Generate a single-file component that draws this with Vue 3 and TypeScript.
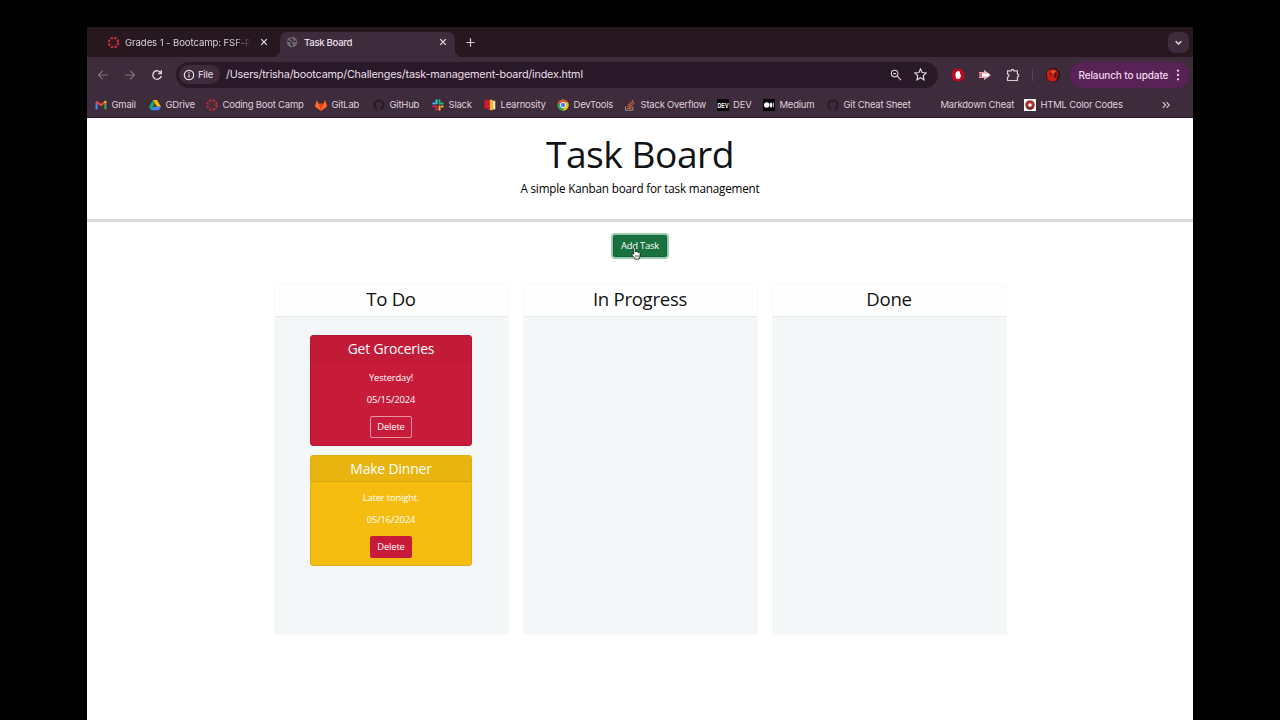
<script setup lang="ts">
interface Task { title: string; note: string; due: string; tone: 'late' | 'soon' }
interface Lane { name: string; tasks: Task[] }

const bookmarks: { icon: string; label: string }[] = [
  { icon: 'gmail', label: 'Gmail' },
  { icon: 'drive', label: 'GDrive' },
  { icon: 'canvas', label: 'Coding Boot Camp' },
  { icon: 'gitlab', label: 'GitLab' },
  { icon: 'github', label: 'GitHub' },
  { icon: 'slack', label: 'Slack' },
  { icon: 'learn', label: 'Learnosity' },
  { icon: 'chrome', label: 'DevTools' },
  { icon: 'stack', label: 'Stack Overflow' },
  { icon: 'dev', label: 'DEV' },
  { icon: 'medium', label: 'Medium' },
  { icon: 'github', label: 'Git Cheat Sheet' },
  { icon: 'none', label: 'Markdown Cheat' },
  { icon: 'html', label: 'HTML Color Codes' },
]

const lanes: Lane[] = [
  {
    name: 'To Do',
    tasks: [
      { title: 'Get Groceries', note: 'Yesterday!', due: '05/15/2024', tone: 'late' },
      { title: 'Make Dinner', note: 'Later tonight.', due: '05/16/2024', tone: 'soon' },
    ],
  },
  { name: 'In Progress', tasks: [] },
  { name: 'Done', tasks: [] },
]
</script>

<template>
  <div class="screen">
    <div class="window">
      <div class="tabs">
        <div class="tab">
          <svg class="fav" viewBox="0 0 14 14"><circle cx="7" cy="7" r="5.2" fill="none" stroke="#c8313c" stroke-width="2.2" stroke-dasharray="2.7 1.384" /><circle cx="7" cy="7" r="2.9" fill="none" stroke="#c8313c" stroke-width=".8" stroke-dasharray=".8 1.477" /></svg>
          <span class="tab-title fade">Grades 1 - Bootcamp: FSF-PT</span>
          <svg class="x" viewBox="0 0 8 8"><path d="M1.2 1.2l5.6 5.6M6.8 1.2L1.2 6.8" /></svg>
        </div>
        <div class="tab active">
          <svg class="fav globe" viewBox="0 0 12 12"><circle cx="6" cy="6" r="5.3" fill="#706873" /><path d="M1.3 5.3l3 .1 1.3 1.5-.6 1.4 1.3.5-.2 1.6M5.2 1.5l-.4 1.7 2 .5.3 1.6 1.8.5.9-1.5" fill="none" stroke="#3e2b3b" stroke-width="1.4" /></svg>
          <span class="tab-title">Task Board</span>
          <svg class="x" viewBox="0 0 8 8"><path d="M1.2 1.2l5.6 5.6M6.8 1.2L1.2 6.8" /></svg>
        </div>
        <svg class="plus" viewBox="0 0 8 8"><path d="M4 .3v7.4M.3 4h7.4" /></svg>
        <div class="tab-search"><svg viewBox="0 0 8 8"><path d="M1.5 2.8L4 5.3l2.500-2.500" /></svg></div>
      </div>

      <div class="toolbar">
        <svg class="nav dim" viewBox="0 0 12 12"><path d="M11 6H1.500M5.800 1.700L1.500 6l4.300 4.300" /></svg>
        <svg class="nav dim" viewBox="0 0 12 12"><path d="M1 6h9.500M6.200 1.700L10.500 6l-4.300 4.300" /></svg>
        <svg class="nav" viewBox="0 0 12 12"><path d="M10 4.200A4.300 4.300 0 1 0 10.300 7M10.300 1.300v3.200H7.100" /></svg>
        <div class="address">
          <div class="chip">
            <svg viewBox="0 0 12 12"><circle cx="6" cy="6" r="4.700" /><path d="M6 5.500v3M6 3.200v1.200" /></svg>
            <span>File</span>
          </div>
          <span class="url">/Users/trisha/bootcamp/Challenges/task-management-board/index.html</span>
          <svg class="glass" viewBox="0 0 12 12"><circle cx="4.600" cy="4.600" r="3.300" /><path d="M7.200 7.200l3.900 3.900M3.200 4.600H6" /></svg>
          <svg class="star" viewBox="0 0 12 12"><path d="M6 .8l1.500 3.400 3.800.4-2.800 2.500.8 3.800L6 9l-3.300 1.900.8-3.800L.7 4.600l3.800-.4z" /></svg>
        </div>
        <svg class="adblock" viewBox="0 0 14 14"><path d="M4.300.7h5.400l3.600 3.600v5.400l-3.600 3.600H4.300L.7 9.700V4.300z" fill="#bd0b20" /><path d="M4.500 5.500V8c0 2 1 3 2.600 3s2.500-1.200 2.700-3l.2-2-1 .8V3.600h-1L7.500 3h-1l-.5.7-.8.2z" fill="#fff" /></svg>
        <svg class="arrow" viewBox="0 0 14 12"><path d="M1 3h5V.8L13 6l-7 5.200V9H1z" fill="#e5a1ac" /><path d="M4 6h7" stroke="#fff" stroke-width="3" /><path d="M1 4h3v4H1z" fill="#c5717e" /></svg>
        <svg class="puzzle" viewBox="0 0 14 14"><path d="M1.500 2.800h3.700c0-1.900 2.600-1.900 2.600 0h3.600v3.400c1.900 0 1.900 2.700 0 2.700v3.600H1.500V9.200c2 0 2-3 0-3z" /></svg>
        <i class="rule"></i>
        <svg class="avatar" viewBox="0 0 16 16"><circle cx="8" cy="8" r="7.200" fill="#391117" /><path d="M1.800 6c1-3 4-4.200 6-3.500 3 0 5 2 5.300 4.400L11 13.500c-3 2-7 .8-8.500-1.500z" fill="#c91d16" /><path d="M6 4l4-1 1 2-1.700 1.500L7 6z" fill="#e15b21" /><path d="M10 5l2 1-1 5-2-1zM5 5l1 3-1 2z" fill="#481116" /></svg>
        <div class="relaunch"><span>Relaunch to update</span><svg viewBox="0 0 4 12"><circle cx="2" cy="1.700" r="1.150" /><circle cx="2" cy="6" r="1.150" /><circle cx="2" cy="10.300" r="1.150" /></svg></div>
      </div>

      <div class="bookmarks">
        <div v-for="b in bookmarks" :key="b.label" class="bookmark">
          <svg viewBox="0 0 12 12">
            <g v-if="b.icon === 'gmail'" fill="none" stroke-width="2.200"><path d="M1.600 10.300V3" stroke="#4285f4" /><path d="M10.400 10.300V3" stroke="#34a853" /><path d="M1.200 2.500L6 6.200l4.800-3.700" stroke="#ea4335" /><path d="M9.400 3.500l1.700-1.200" stroke="#fbbc04" /></g>
            <g v-else-if="b.icon === 'drive'"><path d="M4 1h4l4 6.800H8z" fill="#fbbc04" /><path d="M4 1l2 3.400L2 11.200 0 7.800z" fill="#20a464" /><path d="M4 7.800h8l-2 3.400H2z" fill="#4285f4" /></g>
            <g v-else-if="b.icon === 'canvas'" fill="none" stroke="#b82d38"><circle cx="6" cy="6" r="4.800" stroke-width="2" stroke-dasharray="2.500 1.270" /><circle cx="6" cy="6" r="2.600" stroke-width=".8" stroke-dasharray=".8 1.242" /></g>
            <g v-else-if="b.icon === 'gitlab'"><path d="M0 6.500L2 1l1.500 3.700h5L10 1l2 5.500-.7 1.800L6 12 .7 8.300z" fill="#fc6d26" /><path d="M3.500 4.700h5L6 12z" fill="#e24329" /></g>
            <path v-else-if="b.icon === 'github'" fill="#251c25" d="M6 .4a5.700 5.700 0 0 0-1.800 11.100V9.900c-1.700.4-2-.8-2-.8-.3-.7-.8-1-.8-1 1-.2 1.500.7 1.500.7.500.8 1.300.6 1.600.4l.4-.8C3.200 8.200 2.500 7.100 2.500 5.700c0-.7.200-1.200.6-1.600-.2-.4-.1-1.200.1-1.600 0 0 .8 0 1.500.7h2.600c.7-.7 1.500-.7 1.500-.7.2.4.3 1.200.1 1.600.4.400.6.900.6 1.600 0 1.400-.7 2.500-2.400 2.700.4.400.6.800.6 1.300v1.800A5.700 5.700 0 0 0 6 .4z" />
            <g v-else-if="b.icon === 'slack'" fill="none" stroke-width="2.100" stroke-linecap="round"><path d="M4.500 1.300v3.200M1.300 4.500h1" stroke="#36c5f0" /><path d="M10.700 4.500H7.500M7.500 1.300v1" stroke="#2eb67d" /><path d="M7.500 10.700V7.500M10.700 7.500h-1" stroke="#ecb22e" /><path d="M1.300 7.500h3.200M4.500 10.700v-1" stroke="#e01e5a" /></g>
            <g v-else-if="b.icon === 'learn'"><path d="M.5.8h5.300v10.400L3 9.600H.5z" fill="#d5172c" /><path d="M5.800.8h3v10.400h-3z" fill="#f6bd2c" /><path d="M8.800 1.800h2.500v8.600H8.800z" fill="#f3dfb3" /></g>
            <g v-else-if="b.icon === 'chrome'"><circle cx="6" cy="6" r="5.700" fill="#34a853" /><path d="M1.100 3.200A5.700 5.700 0 0 1 11 3.400H6L3.700 7.300z" fill="#ea4335" /><path d="M11 3.400A5.700 5.700 0 0 1 5.700 11.700L8.200 7.300 6 3.400z" fill="#fbbc04" /><circle cx="6" cy="6" r="2.900" fill="#fff" /><circle cx="6" cy="6" r="2.200" fill="#4285f4" /></g>
            <g v-else-if="b.icon === 'stack'" fill="none"><path d="M1.500 7.500v3.700h7.300V7.500" stroke="#a58e8d" stroke-width="1" /><path d="M3 9.500h4.400M3.100 7.400l4.400.7M4 5l4 2M5.600 2.800L9 5.700M8 1l2 3.700" stroke="#d76535" stroke-width="1.100" /></g>
            <g v-else-if="b.icon === 'dev'"><rect width="12" height="12" fill="#08080a" /><text x="6" y="8.800" text-anchor="middle" textLength="11" lengthAdjust="spacingAndGlyphs" class="dev-mark">DEV</text></g>
            <g v-else-if="b.icon === 'medium'"><rect width="12" height="12" fill="#000" /><circle cx="3.700" cy="6" r="2.700" fill="#fff" /><ellipse cx="8" cy="6" rx="1.300" ry="2.600" fill="#fff" /><path d="M10.400 3.700v4.600" stroke="#fff" stroke-width=".8" /></g>
            <g v-else-if="b.icon === 'html'"><rect width="12" height="12" fill="#fff" /><circle cx="6" cy="6" r="3.300" fill="none" stroke="#a93331" stroke-width="3" /><path d="M3 8.500a4.200 4.200 0 0 0 6 0" fill="none" stroke="#542426" stroke-width="1.500" /></g>
          </svg>
          <span>{{ b.label }}</span>
        </div>
        <svg class="more" viewBox="0 0 8 8"><path d="M.8 1.200L3.600 4 .8 6.800M4.500 1.200L7.300 4 4.500 6.800" /></svg>
      </div>

      <header class="page-head">
        <h1>Task Board</h1>
        <p>A simple Kanban board for task management</p>
      </header>

      <div class="actions">
        <button class="add">Add Task
          <svg class="pointer" viewBox="0 0 10 13"><path d="M2.800 7.300V1.500c0-1.300 1.700-1.300 1.700 0v3.400c.3-.7 1.500-.5 1.500.3.400-.6 1.500-.4 1.500.4.500-.5 1.500-.2 1.500.7V9c0 1-.7 1.700-.9 3.200H4C3.600 10.600 1.500 9 1 7.800c-.5-1.300.8-1.600 1.800-.5z" fill="#fff" stroke="#111" stroke-width=".8" /><path d="M4.700 8v2.500M6 8v2.500M7.300 8v2.500" stroke="#111" stroke-width=".5" /></svg>
        </button>
      </div>

      <main class="lanes">
        <section v-for="lane in lanes" :key="lane.name" class="lane">
          <h2>{{ lane.name }}</h2>
          <div class="lane-body">
            <article v-for="t in lane.tasks" :key="t.title" class="card" :class="t.tone">
              <h3>{{ t.title }}</h3>
              <div class="card-body">
                <p>{{ t.note }}</p>
                <p>{{ t.due }}</p>
                <button>Delete</button>
              </div>
            </article>
          </div>
        </section>
      </main>
    </div>
  </div>
</template>

<style>
body { background: #000; overflow: hidden; }
</style>

<style scoped>
* { box-sizing: border-box; }
svg { display: block; flex: none; }
h1, h2, h3, p { margin: 0; font-weight: 400; }
button { font: inherit; letter-spacing: inherit; }
.screen { height: 720px; background: #000; padding: 27px 87px 0; overflow: hidden; }
.window { height: 693px; background: #fff; font-family: "Open Sans", "Noto Sans", sans-serif; color: #101214; }

.tabs, .toolbar, .bookmarks { font-family: Inter, "Liberation Sans", sans-serif; color: #ded0dc; display: flex; align-items: center; white-space: nowrap; }
.tabs { height: 30px; background: #27171f; }
.tab { width: 193px; height: 30px; padding: 0 12px 0 20px; display: flex; align-items: center; }
.tab.active { position: relative; width: 175px; height: 25px; padding: 0 8px 0 6px; margin-top: 5px; background: #3e2b3b; border-radius: 7px 7px 0 0; color: #eadfe9; }
.tab.active::before, .tab.active::after { content: ""; position: absolute; bottom: 0; width: 7px; height: 7px; }
.tab.active::before { left: -7px; background: radial-gradient(circle at 0 0, transparent 7px, #3e2b3b 7px); }
.tab.active::after { right: -7px; background: radial-gradient(circle at 100% 0, transparent 7px, #3e2b3b 7px); }
.fav { width: 13px; height: 13px; margin-right: 5px; }
.globe { width: 12px; height: 12px; margin-right: 6px; }
.tab-title { flex: 1; font-size: 9.6px; letter-spacing: -.1px; }
.active .tab-title { margin-top: -5px; font-weight: 500; letter-spacing: -.3px; }
.active svg { margin-top: -5px; }
.tab-title.fade { flex: none; width: 130px; margin-right: 5px; mask-image: linear-gradient(90deg, #000 84%, transparent 97%); }
.x { width: 8px; height: 8px; fill: none; stroke: #e7dce6; stroke-width: 1.2; }
.plus { width: 9px; height: 9px; margin-left: 11px; stroke: #d8c9d5; stroke-width: 1.1; }
.tab-search { margin-left: auto; margin-right: 4px; width: 21px; height: 21px; border-radius: 7px; background: #3e2b3b; display: grid; place-items: center; }
.tab-search svg { width: 9px; height: 9px; fill: none; stroke: #e8dce8; stroke-width: 1.2; }

.toolbar { height: 35px; background: #3e2b3b; padding: 0 4px 0 10px; }
.nav { width: 12px; height: 12px; margin-right: 15px; fill: none; stroke: #dfcfdc; stroke-width: 1.4; }
.dim { stroke: #84717f; stroke-width: 1.1; }
.address { height: 26px; width: 762px; margin-left: -2px; border-radius: 13px; background: #2a1928; display: flex; align-items: center; padding: 0 11.5px 0 3px; }
.chip { width: 41px; height: 19px; border-radius: 10px; background: #3e2b3b; display: flex; align-items: center; padding-left: 4px; gap: 3px; font-size: 9.4px; font-weight: 500; letter-spacing: -.2px; }
.chip svg { width: 12px; height: 12px; fill: none; stroke: #eadcea; stroke-width: 1.2; }
.url { margin-left: 6px; flex: 1; font-size: 10.8px; letter-spacing: -.19px; color: #eadfe9; }
.glass, .star { width: 12px; height: 12px; fill: none; stroke: #e0d1de; stroke-width: 1.1; }
.glass { margin-right: 12px; }
.star { width: 13px; height: 13px; }
.adblock { width: 14px; height: 14px; margin-left: 13px; }
.arrow { width: 14px; height: 12px; margin-left: 13px; }
.puzzle { width: 14px; height: 14px; margin-left: 14px; fill: none; stroke: #dccbd9; stroke-width: 1.2; }
.rule { width: 1px; height: 12px; background: #5b4457; margin-left: 12px; }
.avatar { width: 16px; height: 16px; margin-left: 12px; }
.relaunch { margin-left: auto; width: 119px; height: 26px; border-radius: 13px; background: #592257; color: #efd7ed; display: flex; align-items: center; justify-content: space-between; padding: 0 9.5px 0 8.5px; font-size: 10px; font-weight: 500; letter-spacing: -.13px; }
.relaunch svg { width: 4px; height: 12px; fill: #efd7ed; }

.bookmarks { height: 26px; background: #3e2b3b; border-bottom: 1px solid #29192a; padding: 0 0 0 8px; display: grid; grid-template-columns: 54px 57px 109px 58px 59px 52px 73px 67px 92.5px 46.5px 64px 97px 100px 138px 10px; }
.bookmark { display: flex; align-items: center; gap: 4.500px; font-size: 9.5px; letter-spacing: -.22px; }
.bookmark svg { width: 12px; height: 12px; }
.bookmark .dev-mark { font: 700 7.500px "Liberation Sans", sans-serif; letter-spacing: 0; fill: #fff; }
.more { width: 8px; height: 8px; fill: none; stroke: #d9c9d7; stroke-width: 1.1; }

.page-head { height: 104px; border-bottom: 3px solid #d6d9db; text-align: center; padding-top: 13px; }
h1 { font-size: 37.200px; line-height: 46px; letter-spacing: -.5px; }
.page-head p { font-size: 11.700px; line-height: 18px; margin-top: 2px; letter-spacing: -.18px; color: #000; }
.actions { height: 62px; padding-top: 13px; display: flex; justify-content: center; align-items: flex-start; }
.add { position: relative; width: 54px; height: 22px; padding: 0; border: 1px solid #14633d; border-radius: 2px; background: #19713f; color: #fff; font-size: 9.500px; letter-spacing: -.25px; line-height: 18px; box-shadow: 0 0 0 2px #9bcbb0; white-space: nowrap; }
.pointer { position: absolute; left: 17px; top: 11px; width: 10px; height: 13px; }

.lanes { display: grid; grid-template-columns: repeat(3, 235px); justify-content: center; column-gap: 14px; }
.lane { height: 351px; background: #f3f7f8; border: 1px solid #f8fafa; display: flex; flex-direction: column; }
h2 { height: 32px; background: #fefefe; border-bottom: 1px solid #e6eaeb; text-align: center; font-size: 18.600px; line-height: 28px; letter-spacing: -.28px; }
.lane-body { padding: 18px 35.500px 0; display: flex; flex-direction: column; gap: 9px; }
.card { height: 111px; border-radius: 3px; color: #fff; text-align: center; border: 1px solid; overflow: hidden; letter-spacing: -.15px; }
.late { background: #c81b3a; border-color: #b21834; }
.soon { background: #f5bd10; border-color: #ddad1c; }
h3 { height: 26px; font-size: 13.900px; line-height: 25px; border-bottom: 1px solid #c01938; background: #c21b38; }
.soon h3 { background: #eab410; border-color: #d9a90f; }
.card-body { display: flex; flex-direction: column; align-items: center; padding-top: 9px; font-size: 9.400px; }
.card-body p { line-height: 14px; margin-bottom: 8.300px; }
.card-body button { width: 42px; height: 22px; padding: 0; line-height: 18px; color: #fff; border-radius: 2px; background: #c81b3a; border: 1px solid #e596a3; }
.soon button { border-color: #c81b3a; }
</style>
